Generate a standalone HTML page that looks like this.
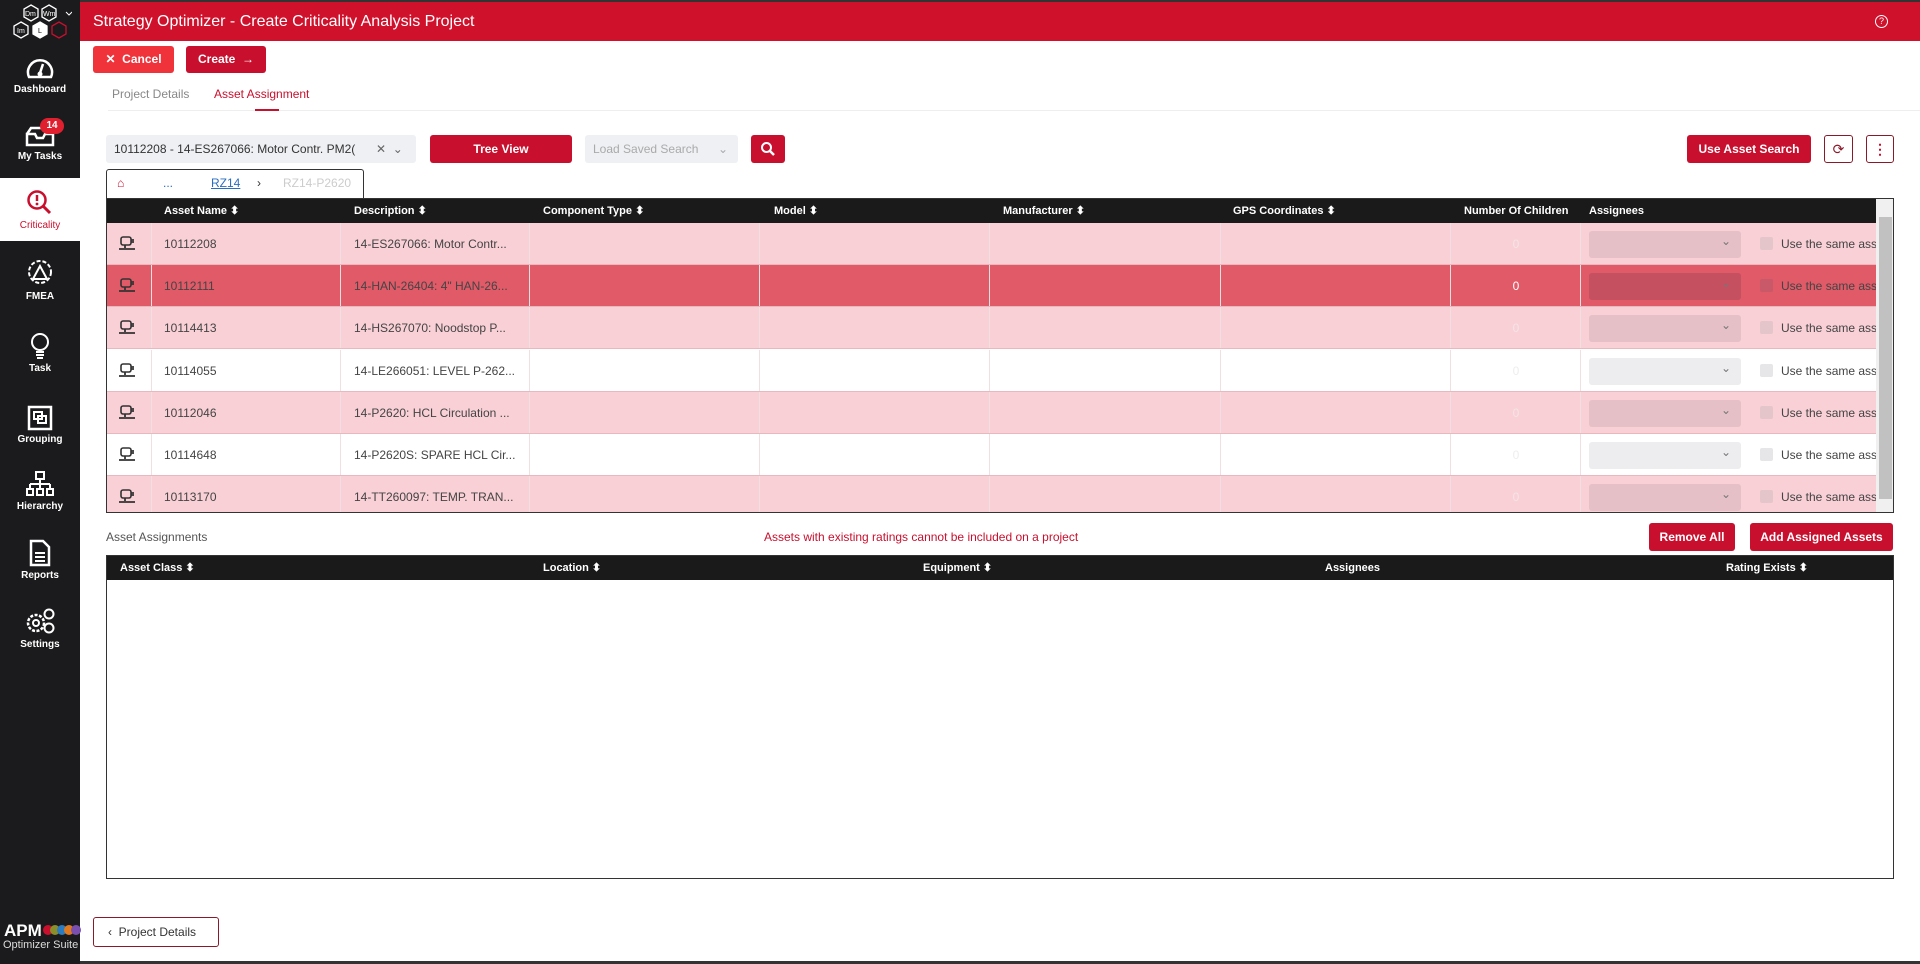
<!DOCTYPE html>
<html><head><meta charset="utf-8"><style>
*{box-sizing:border-box;margin:0;padding:0}
body{width:1920px;height:964px;overflow:hidden;background:#fff;font-family:"Liberation Sans",sans-serif;position:relative;font-size:13px;color:#333}
.a{position:absolute}
#side{left:0;top:0;width:80px;height:964px;background:#1b1b1d}
.si{position:absolute;left:0;width:80px;text-align:center;color:#fff;font-size:10px;font-weight:bold}
#hdr{left:80px;top:0;width:1840px;height:41px;background:#d0112b;border-top:2px solid #333;color:#fff;font-size:16px;line-height:39px;padding-left:13px}
.btn{position:absolute;border-radius:3px;color:#fff;font-weight:bold;font-size:12px;text-align:center;background:#c8102e}
.th{position:absolute;top:0;height:24px;line-height:24px;color:#fff;font-weight:bold;font-size:11px}
.row{position:absolute;left:0;width:1769px;height:42px;border-bottom:1px solid #e8b8bf;overflow:hidden}
.c{position:absolute;top:0;height:42px;line-height:42px;font-size:12px;color:#444;border-right:1px solid #f0e0e2}
.dd{position:absolute;top:8px;width:152px;height:27px;background:#e5c0c7;border-radius:3px}
.cb{position:absolute;top:14px;width:13px;height:13px;background:#e3c5ca;border-radius:2px}
.ut{position:absolute;top:0;line-height:42px;font-size:12px;color:#444;white-space:nowrap}
</style></head><body>
<div id="side" class="a">
 <svg class="a" style="left:10px;top:2px" width="62" height="40" viewBox="0 0 62 40"><g fill="none" stroke="#fff" stroke-width="1.3"><polygon points="21,3 28,7 28,15 21,19 14,15 14,7"/><polygon points="39,3 46,7 46,15 39,19 32,15 32,7"/><polygon points="11,20 18,24 18,32 11,36 4,32 4,24" /><polygon points="30,20 37,24 37,32 30,36 23,32 23,24" fill="#fff"/><polygon points="49,20 56,24 56,32 49,36 42,32 42,24" stroke="#c8102e"/></g><text x="15" y="14" font-size="7" fill="#fff">Dm</text><text x="33" y="14" font-size="7" fill="#fff">Wm</text><text x="7" y="31" font-size="7" fill="#fff">Im</text><text x="28" y="31" font-size="7" fill="#000">L</text><path d="M56 10l3 3 3-3" stroke="#fff" fill="none"/></svg>
 <div class="si" style="top:55px"><svg width="30" height="26" viewBox="0 0 30 26"><path d="M4 22A12 12 0 1 1 26 22Z" fill="none" stroke="#fff" stroke-width="2.5"/><path d="M15 18l3-9" stroke="#fff" stroke-width="2.5"/><circle cx="15" cy="19" r="2.5" fill="#fff"/></svg><div>Dashboard</div></div>
 <div class="si" style="top:122px"><svg width="34" height="26" viewBox="0 0 34 26"><path d="M4 12h8l2 4h6l2-4h8v11H4z M4 12l4-6h18l4 6" fill="none" stroke="#fff" stroke-width="2.5"/></svg><div>My Tasks</div></div>
 <div class="a" style="left:40px;top:118px;width:24px;height:16px;border-radius:8px;background:#e0202f;color:#fff;font-size:10px;font-weight:bold;text-align:center;line-height:16px">14</div>
 <div class="a" style="left:0;top:178px;width:80px;height:63px;background:#fff"></div>
 <div class="si" style="top:189px;color:#c8102e;font-weight:normal"><svg width="30" height="28" viewBox="0 0 30 28"><circle cx="12" cy="11" r="8.5" fill="none" stroke="#c8102e" stroke-width="2.5"/><path d="M18 17l7 7" stroke="#c8102e" stroke-width="3"/><path d="M12 6v6" stroke="#c8102e" stroke-width="2.5"/><circle cx="12" cy="15" r="1.4" fill="#c8102e"/></svg><div>Criticality</div></div>
 <div class="si" style="top:256px"><svg width="32" height="32" viewBox="0 0 32 32"><circle cx="16" cy="16" r="11" fill="none" stroke="#fff" stroke-width="2" stroke-dasharray="4 2"/><path d="M16 10l7 13H9z" fill="none" stroke="#fff" stroke-width="2"/></svg><div>FMEA</div></div>
 <div class="si" style="top:330px"><svg width="28" height="30" viewBox="0 0 28 30"><circle cx="14" cy="12" r="8" fill="none" stroke="#fff" stroke-width="2"/><path d="M10 22h8M10 25h8M11 28h6" stroke="#fff" stroke-width="2"/></svg><div>Task</div></div>
 <div class="si" style="top:405px"><svg width="28" height="26" viewBox="0 0 28 26"><rect x="3" y="2" width="22" height="22" fill="none" stroke="#fff" stroke-width="2.5"/><rect x="8" y="7" width="8" height="7" fill="none" stroke="#fff" stroke-width="2"/><rect x="12" y="11" width="8" height="7" fill="none" stroke="#fff" stroke-width="2"/></svg><div>Grouping</div></div>
 <div class="si" style="top:470px"><svg width="30" height="28" viewBox="0 0 30 28"><rect x="11" y="2" width="8" height="7" fill="none" stroke="#fff" stroke-width="2"/><path d="M15 9v5M5 14h20M5 14v5M15 14v5M25 14v5" stroke="#fff" stroke-width="2"/><rect x="2" y="19" width="6" height="6" fill="none" stroke="#fff" stroke-width="2"/><rect x="12" y="19" width="6" height="6" fill="none" stroke="#fff" stroke-width="2"/><rect x="22" y="19" width="6" height="6" fill="none" stroke="#fff" stroke-width="2"/></svg><div>Hierarchy</div></div>
 <div class="si" style="top:539px"><svg width="24" height="28" viewBox="0 0 24 28"><path d="M3 2h12l6 6v18H3z" fill="none" stroke="#fff" stroke-width="2.5"/><path d="M7 14h10M7 18h10M7 22h10" stroke="#fff" stroke-width="2"/></svg><div>Reports</div></div>
 <div class="si" style="top:606px"><svg width="34" height="30" viewBox="0 0 34 30"><circle cx="13" cy="17" r="8" fill="none" stroke="#fff" stroke-width="2.5" stroke-dasharray="3 1.5"/><circle cx="13" cy="17" r="3" fill="none" stroke="#fff" stroke-width="2"/><circle cx="26" cy="8" r="4.5" fill="none" stroke="#fff" stroke-width="2"/><circle cx="26" cy="22" r="4.5" fill="none" stroke="#fff" stroke-width="2"/></svg><div>Settings</div></div>
 <div class="a" style="left:4px;top:921px;color:#fff;font-size:17px;font-weight:bold;white-space:nowrap">APM<svg width="38" height="12" viewBox="0 0 38 12" style="margin-left:1px"><circle cx="5" cy="6" r="5" fill="#c8102e"/><circle cx="12" cy="6" r="5" fill="#8a8f2a"/><circle cx="19" cy="6" r="5" fill="#2a7bbf"/><circle cx="26" cy="6" r="5" fill="#e07a1f"/><circle cx="33" cy="6" r="5" fill="#7a4fb0"/></svg></div>
 <div class="a" style="left:3px;top:939px;color:#ddd;font-size:11px;white-space:nowrap">Optimizer Suite</div>
</div>
<div id="hdr" class="a">Strategy Optimizer - Create Criticality Analysis Project<span style="position:absolute;right:32px;top:13px;width:13px;height:13px;border:1px solid #fff;border-radius:50%;font-size:9px;line-height:11px;text-align:center">?</span></div>
<div class="a" style="left:80px;top:961px;width:1840px;height:3px;background:#333"></div>
<div class="btn" style="left:93px;top:46px;width:81px;height:27px;line-height:27px;background:#f0333a">✕&nbsp; Cancel</div>
<div class="btn" style="left:186px;top:46px;width:80px;height:27px;line-height:27px">Create &nbsp;→</div>
<div class="a" style="left:112px;top:87px;font-size:12px;color:#888">Project Details</div>
<div class="a" style="left:214px;top:87px;font-size:12px;color:#c8102e">Asset Assignment</div>
<div class="a" style="left:108px;top:110px;width:1812px;height:1px;background:#eee"></div>
<div class="a" style="left:255px;top:109px;width:24px;height:2px;background:#c8102e"></div>
<div class="a" style="left:106px;top:135px;width:310px;height:28px;background:#eef0f3;border-radius:3px;font-size:12px;line-height:28px;padding-left:8px;color:#333;white-space:nowrap;overflow:hidden">10112208 - 14-ES267066: Motor Contr. PM2(<span style="position:absolute;left:270px;color:#666">✕ &nbsp;⌄</span></div>
<div class="btn" style="left:430px;top:135px;width:142px;height:28px;line-height:28px">Tree View</div>
<div class="a" style="left:585px;top:135px;width:153px;height:28px;background:#eef0f3;border-radius:3px;font-size:12px;line-height:28px;padding-left:8px;color:#aaa">Load Saved Search<span style="position:absolute;right:10px">⌄</span></div>
<div class="btn" style="left:751px;top:135px;width:34px;height:28px"><svg width="16" height="16" viewBox="0 0 16 16" style="margin-top:6px"><circle cx="6.5" cy="6.5" r="4.5" fill="none" stroke="#fff" stroke-width="2"/><path d="M10 10l4 4" stroke="#fff" stroke-width="2.5"/></svg></div>
<div class="btn" style="left:1687px;top:135px;width:124px;height:28px;line-height:28px">Use Asset Search</div>
<div class="a" style="left:1824px;top:135px;width:29px;height:28px;border:1px solid #8a1a2a;border-radius:3px;text-align:center;line-height:26px;color:#8a1a2a;font-size:14px">⟳</div>
<div class="a" style="left:1866px;top:135px;width:28px;height:28px;border:1px solid #8a1a2a;border-radius:3px;text-align:center;line-height:26px;color:#c8102e;font-weight:bold;font-size:14px">⋮</div>
<div class="a" style="left:106px;top:169px;width:258px;height:30px;border:1px solid #333;border-bottom:none;border-radius:3px 3px 0 0;font-size:12px;line-height:26px"><span class="a" style="left:10px;color:#c8102e">⌂</span><span class="a" style="left:56px;color:#2a6ebf">...</span><span class="a" style="left:104px;color:#2a6ebf;text-decoration:underline">RZ14</span><span class="a" style="left:150px">›</span><span class="a" style="left:176px;color:#ccc">RZ14-P2620</span></div>
<div class="a" style="left:106px;top:198px;width:1788px;height:315px;border:1px solid #333;overflow:hidden">
 <div class="a" style="left:0;top:0;width:1788px;height:24px;background:#1a1a1a"></div>
 <div class="th" style="left:57px">Asset Name ⬍</div><div class="th" style="left:247px">Description ⬍</div><div class="th" style="left:436px">Component Type ⬍</div><div class="th" style="left:667px">Model ⬍</div><div class="th" style="left:896px">Manufacturer ⬍</div><div class="th" style="left:1126px">GPS Coordinates ⬍</div><div class="th" style="left:1357px">Number Of Children</div><div class="th" style="left:1482px">Assignees</div>
 <div id="rows"></div>
 <div class="a" style="left:1769px;top:0;width:19px;height:315px;background:#f0f0f0"></div>
 <div class="a" style="left:1772px;top:18px;width:13px;height:282px;background:#c1c1c1"></div>
</div>
<script>
var d=[["10112208","14-ES267066: Motor Contr...","#f8d0d6"],["10112111","14-HAN-26404: 4\" HAN-26...","#e05a68"],["10114413","14-HS267070: Noodstop P...","#f8d0d6"],["10114055","14-LE266051: LEVEL P-262...","#fff"],["10112046","14-P2620: HCL Circulation ...","#f8d0d6"],["10114648","14-P2620S: SPARE HCL Cir...","#fff"],["10113170","14-TT260097: TEMP. TRAN...","#f8d0d6"]];
var h="",cols=[0,45,234,423,653,883,1114,1344,1474];
var ic='<svg width="20" height="18" viewBox="0 0 20 18"><rect x="4" y="2" width="10" height="8" rx="2" fill="none" stroke="#333" stroke-width="1.6"/><path d="M14 5h3M14 7h3M8 10v3M2 14h16" stroke="#333" stroke-width="1.8"/></svg>';
d.forEach(function(r,i){var hv=i==1,wh=r[2]=="#fff";h+='<div class="row" style="top:'+(24+i*42.2)+'px;background:'+r[2]+'">';
for(var k=0;k<8;k++)h+='<div class="c" style="left:'+cols[k]+'px;width:'+(cols[k+1]-cols[k])+'px"></div>';
h+='<div class="c" style="left:10px;top:12px;height:20px;line-height:20px;border:none;width:30px">'+ic+'</div>';
h+='<div class="c" style="left:57px;border:none">'+r[0]+'</div><div class="c" style="left:247px;border:none">'+r[1]+'</div>';
h+='<div class="c" style="left:1344px;width:130px;border:none;text-align:center;color:'+(hv?'#fff':(wh?'#eee':'#f4e4e6'))+'">0</div>';
h+='<div class="dd" style="left:1482px;'+(hv?'background:#c45060':(wh?'background:#ededf0':''))+'"><span style="position:absolute;right:10px;top:3px;color:#777;font-size:12px">⌄</span></div><div class="cb" style="left:1653px;'+(hv?'background:#c95868':(wh?'background:#e6e6e8':''))+'"></div><div class="ut" style="left:1674px">Use the same assignee</div></div>';});
document.getElementById("rows").innerHTML=h;
</script>
<div class="a" style="left:106px;top:530px;font-size:12px;color:#555">Asset Assignments</div>
<div class="a" style="left:764px;top:530px;font-size:12px;color:#c8102e">Assets with existing ratings cannot be included on a project</div>
<div class="btn" style="left:1649px;top:523px;width:86px;height:28px;line-height:28px">Remove All</div>
<div class="btn" style="left:1750px;top:523px;width:143px;height:28px;line-height:28px">Add Assigned Assets</div>
<div class="a" style="left:106px;top:555px;width:1788px;height:324px;border:1px solid #333">
 <div class="a" style="left:0;top:0;width:1786px;height:24px;background:#1a1a1a"></div>
 <div class="th" style="left:13px">Asset Class ⬍</div><div class="th" style="left:436px">Location ⬍</div><div class="th" style="left:816px">Equipment ⬍</div><div class="th" style="left:1218px">Assignees</div><div class="th" style="left:1619px">Rating Exists ⬍</div>
</div>
<div class="a" style="left:93px;top:917px;width:126px;height:30px;border:1px solid #8a1a2a;border-radius:3px;font-size:12px;line-height:28px;padding-left:14px;color:#333">‹ &nbsp;Project Details</div>
</body></html>
